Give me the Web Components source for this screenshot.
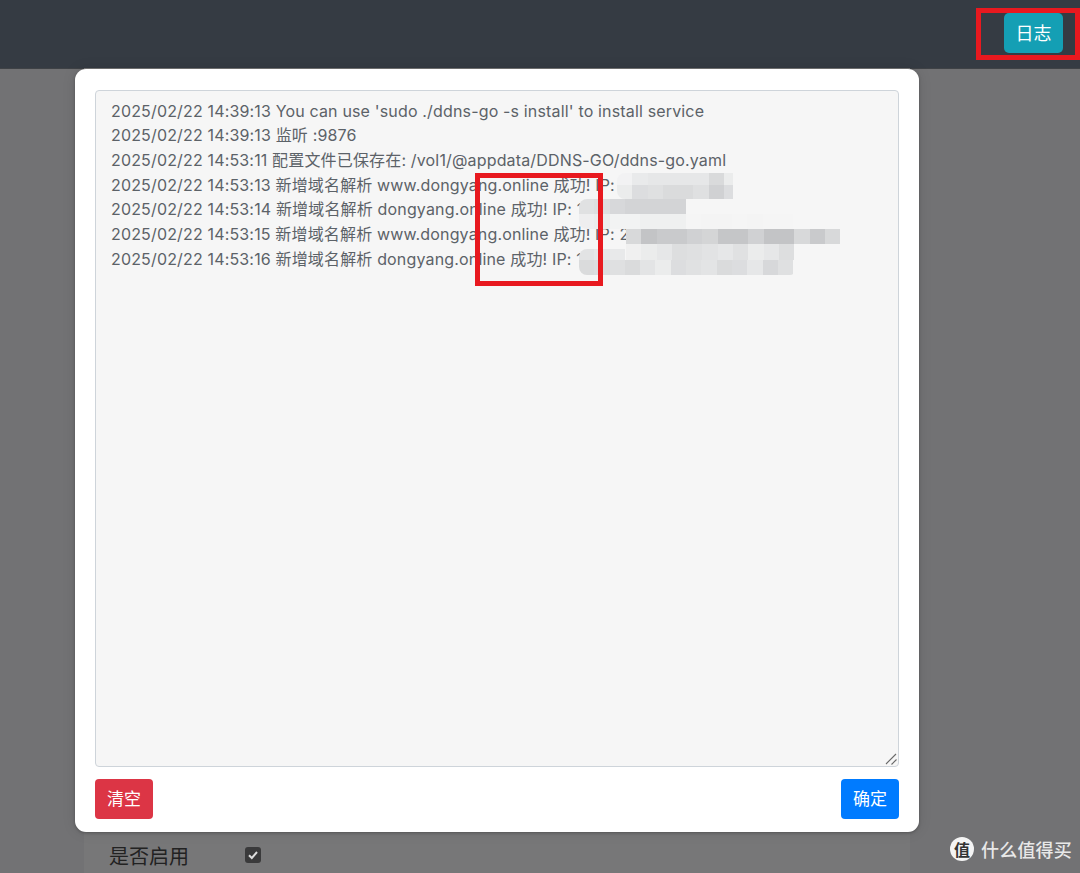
<!DOCTYPE html>
<html lang="zh"><head><meta charset="utf-8"><title>DDNS-GO 日志</title>
<style>html,body{margin:0;padding:0;background:#727274}</style></head>
<body>
<x-app></x-app>
<script>
const FONT='Inter,"Liberation Sans","Noto Sans CJK SC",sans-serif';
const CJK='"Noto Sans CJK SC",sans-serif';
class XBtn extends HTMLElement{constructor(){super();this.attachShadow({mode:'open'}).innerHTML=`<style>
:host{display:inline-flex;align-items:center;justify-content:center;box-sizing:border-box;height:40px;width:58px;border-radius:4px;color:#fff;font:17px ${CJK};background:var(--bg);padding-bottom:3px}
</style><slot></slot>`}}
customElements.define('x-btn',XBtn);

class XMosaic extends HTMLElement{constructor(){super();this.attachShadow({mode:'open'});}
connectedCallback(){
 const rows=JSON.parse(this.dataset.rows);
 this.shadowRoot.innerHTML=`<style>
 :host{position:absolute;left:0;top:0;width:100%;height:100%;pointer-events:none}
 .r{position:absolute;height:var(--h);width:var(--w);display:flex;overflow:hidden;filter:blur(.7px)}
 .r i{display:block;flex:0 0 15.3px;height:100%}
 </style>`+rows.map(r=>`<div class="r" style="left:${r.x}px;top:${r.y}px;--h:${r.h}px;--w:${r.w}px;${r.rad?'border-radius:'+r.rad:''}">${r.c.map(c=>`<i style="background:#${c}"></i>`).join('')}</div>`).join('');
}}
customElements.define('x-mosaic',XMosaic);

class XLog extends HTMLElement{constructor(){super();this.attachShadow({mode:'open'}).innerHTML=`<style>
:host{display:block;position:relative;box-sizing:border-box;height:677px;background:#f6f6f6;border:1px solid #ced4da;border-radius:4px;padding:7.8px 15px;color:#5c6268;font:16px/24.67px ${FONT};letter-spacing:.16px;white-space:pre;overflow:hidden}
svg{position:absolute;right:0;bottom:0}
</style><slot></slot><svg width="14" height="14" viewBox="0 0 14 14"><path d="M2 12 L12 2 M7.5 12.5 L12.5 7.5" stroke="#6b6b6b" stroke-width="1.1" fill="none"/></svg>`}}
customElements.define('x-log',XLog);

class XModal extends HTMLElement{constructor(){super();this.attachShadow({mode:'open'}).innerHTML=`<style>
:host{position:absolute;left:75px;top:69px;width:844px;height:763px;box-sizing:border-box;background:#fff;border-radius:11px;padding:21px 20px 13px;display:flex;flex-direction:column;box-shadow:0 1px 3px rgba(0,0,0,.25),0 0 14px rgba(0,0,0,.1)}
.foot{display:flex;justify-content:space-between;margin-top:12px}
</style><slot name="body"></slot><div class="foot"><slot name="left"></slot><slot name="right"></slot></div>`}}
customElements.define('x-modal',XModal);

class XBrand extends HTMLElement{constructor(){super();this.attachShadow({mode:'open'}).innerHTML=`<style>
:host{position:absolute;right:8px;top:837px;display:flex;align-items:center;gap:7px;color:#e8e8e8;font:500 18px/24px ${CJK};letter-spacing:.2px}
.c{width:24px;height:24px;border-radius:50%;background:#f4f4f4;color:#333;display:flex;align-items:center;justify-content:center;font:700 16px/24px ${CJK};letter-spacing:0}
</style><span class="c">值</span><span>什么值得买</span>`}}
customElements.define('x-brand',XBrand);

class XApp extends HTMLElement{constructor(){super();this.attachShadow({mode:'open'}).innerHTML=`<style>
:host{display:block;position:relative;width:1080px;height:873px;overflow:hidden;background:#727274;font-family:${FONT}}
.nav{height:68px;box-sizing:border-box;background:#353b43;display:flex;justify-content:flex-end;align-items:center;box-shadow:0 1px 0 #3f4246;padding:0 17px 2px 0}
.page{margin:0 170px 0 84px;width:826px;height:805px;background:#777778;display:flex;flex-direction:column;justify-content:flex-end}
.row{display:flex;align-items:center;height:50px;padding:0 25px;box-sizing:border-box;color:#222;font:20px/28px ${CJK};margin-bottom:-7px}
.row span{width:136px;padding-top:1px}
.cb{width:16px;height:16px;border-radius:3px;background:#3a3a3b;display:flex;align-items:center;justify-content:center}
.mark{position:absolute;border:5px solid #e8191f;box-sizing:border-box}
</style>
<div class="nav"><x-btn style="--bg:#149fb4;width:59px;height:40px;font-size:18px;border-radius:5px">日志</x-btn></div>
<div class="page"><div class="row"><span>是否启用</span><div class="cb"><svg width="12" height="12" viewBox="0 0 12 12"><path d="M2 6.3 L4.8 9 L10 3" stroke="#ddd" stroke-width="2" fill="none"/></svg></div></div></div>
<x-modal>
 <x-log slot="body">2025/02/22 14:39:13 You can use 'sudo ./ddns-go -s install' to install service
2025/02/22 14:39:13 监听 :9876
2025/02/22 14:53:11 配置文件已保存在: /vol1/@appdata/DDNS-GO/ddns-go.yaml
2025/02/22 14:53:13 新增域名解析 www.dongyang.online 成功! IP:
2025/02/22 14:53:14 新增域名解析 dongyang.online 成功! IP: 1
2025/02/22 14:53:15 新增域名解析 www.dongyang.online 成功! IP: 2
2025/02/22 14:53:16 新增域名解析 dongyang.online 成功! IP: 1</x-log>
 <x-btn slot="left" style="--bg:#dc3545">清空</x-btn>
 <x-btn slot="right" style="--bg:#007bff">确定</x-btn>
</x-modal>
<x-mosaic data-rows='[
{"x":617,"y":173,"w":116,"h":12,"rad":"8px 0 0 0","c":["f2f2f3","e9eaeb","e6e7e8","e6e7e8","e6e7e8","e6e7e8","d9dadb","ebecec"]},
{"x":617,"y":185,"w":116,"h":14,"rad":"0 0 0 8px","c":["ebecec","dcdddf","dfe0e1","dadbdc","dadbdc","dfe0e1","d0d1d3","dcdddf"]},
{"x":579,"y":199,"w":108,"h":15,"rad":"8px 0 0 0","c":["e0e1e2","dddedf","d7d8da","d3d4d6","d3d4d6","d3d4d6","d3d4d6"]},
{"x":579,"y":214,"w":215,"h":15,"rad":"0 0 0 8px","c":["eeeeef","ebecec","f2f3f3","f2f3f3","eff0f0","eff0f0","eff0f0","f5f5f5","f4f4f4","f4f4f4","f5f5f5","f4f4f4","f5f5f5","f5f5f5"]},
{"x":626,"y":229,"w":214,"h":15,"c":["d8d9da","c3c4c6","c9cacc","c9cacc","d0d1d3","d4d5d6","c5c6c8","c5c6c8","d0d1d3","c3c4c6","c3c4c6","d8d9da","c9cacc","d8d9da"]},
{"x":626,"y":244,"w":169,"h":16,"c":["f0f0f0","ebecec","e6e7e8","dddedf","dfe0e1","e2e3e4","e6e7e8","e0e1e2","ebecec","e6e7e8","dddedf"]},
{"x":579,"y":249,"w":47,"h":12,"rad":"8px 0 0 0","c":["e2e3e4","e6e7e8","e8e9ea"]},
{"x":579,"y":260,"w":215,"h":15,"rad":"0 0 4px 8px","c":["dadbdc","dcdddf","dfe0e1","dadbdc","e3e4e5","ebecec","dcdddf","e0e1e2","e3e4e5","dadbdc","dcdddf","e6e7e8","d7d8da","dfe0e1"]}
]'></x-mosaic>
<div class="mark" style="left:976px;top:8px;width:104px;height:52px"></div>
<div class="mark" style="left:475px;top:173px;width:128px;height:113px"></div>
<x-brand></x-brand>`}}
customElements.define('x-app',XApp);
</script>
</body></html>
